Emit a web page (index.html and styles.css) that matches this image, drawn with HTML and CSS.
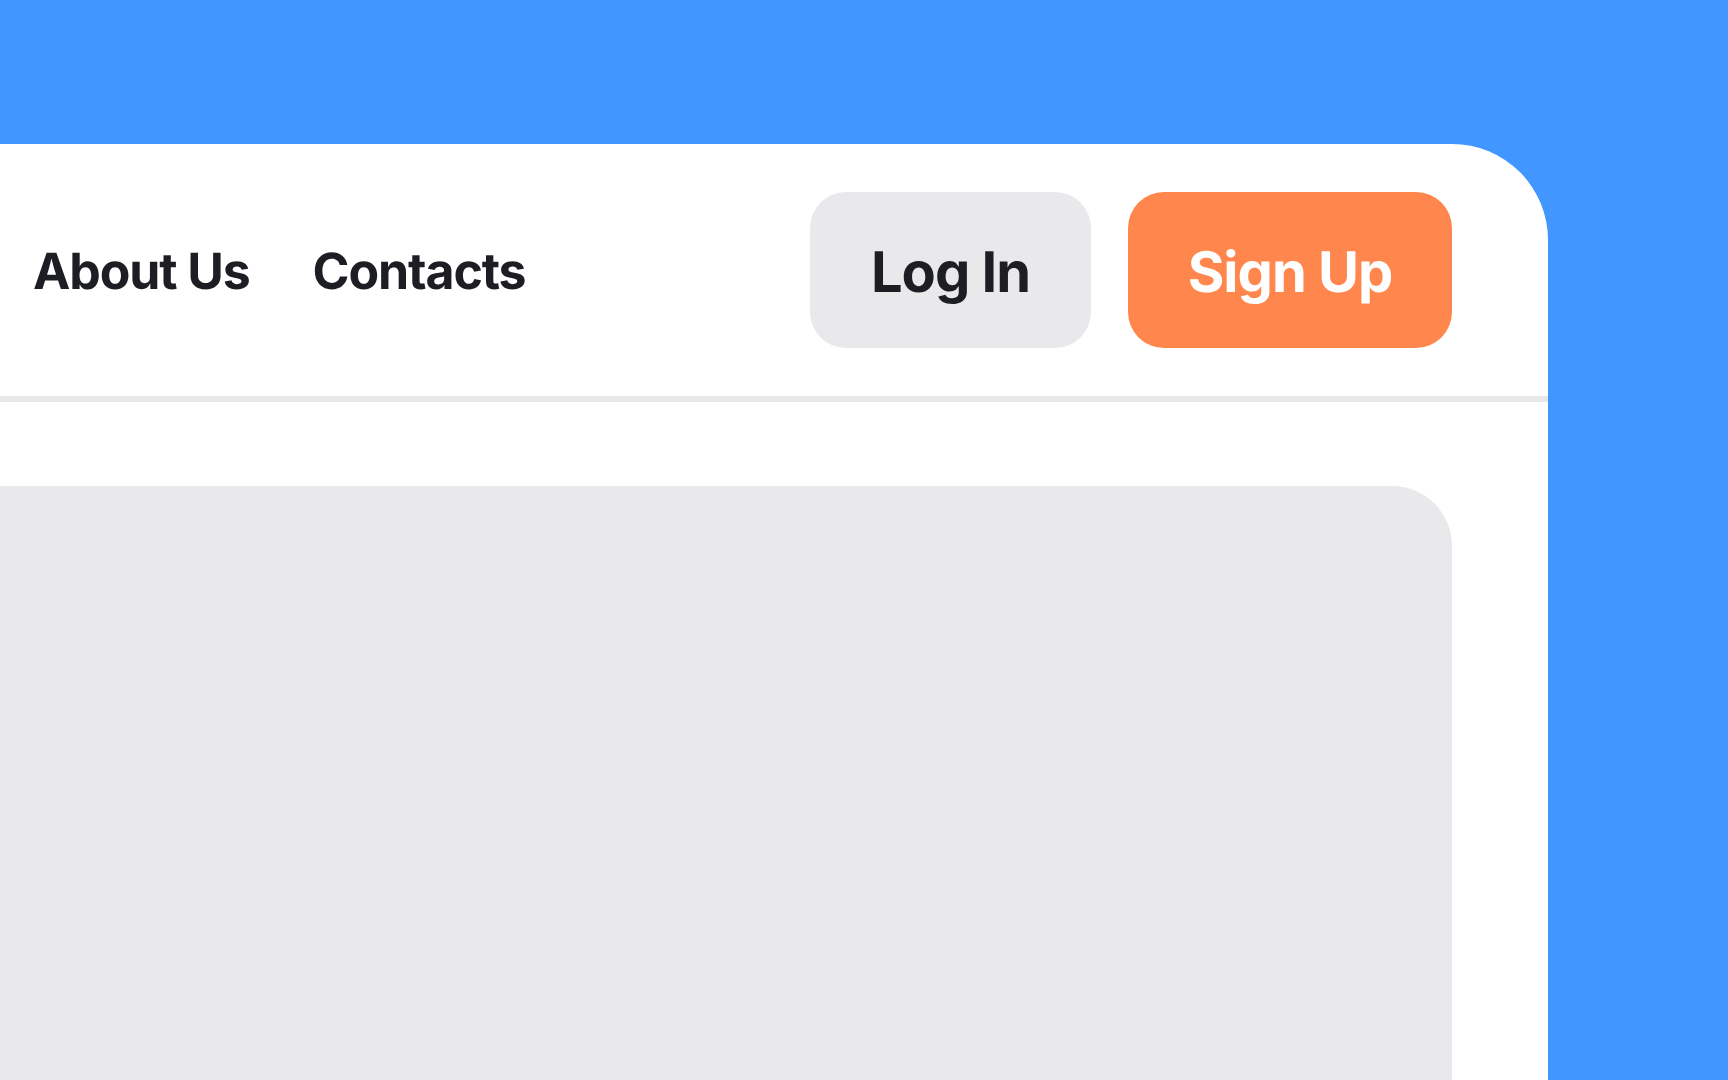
FILE: index.html
```html
<!DOCTYPE html>
<html lang="en">
<head>
<meta charset="utf-8">
<title>Header</title>
<link rel="stylesheet" href="styles.css">
</head>
<body>
<div class="panel">
  <header class="header">
    <nav class="nav">
      <a class="nav-link" href="#">About Us</a>
      <a class="nav-link" href="#">Contacts</a>
    </nav>
    <div class="actions">
      <a class="btn btn-login" href="#">Log In</a>
      <a class="btn btn-signup" href="#">Sign Up</a>
    </div>
  </header>
  <main class="content">
    <div class="hero"></div>
  </main>
</div>
</body>
</html>
```
FILE: styles.css
```css
html, body {
  margin: 0;
  padding: 0;
  height: 100%;
  overflow: hidden;
}
body {
  background: #4197ff;
  font-family: Inter, "Noto Sans", sans-serif;
  padding-top: 144px;
  box-sizing: border-box;
  text-rendering: geometricPrecision;
}
.panel {
  margin-right: 180px;
  background: #ffffff;
  border-top-right-radius: 96px;
  height: 936px;
  overflow: hidden;
}
.header {
  height: 252px;
  border-bottom: 6px solid #e8e8e9;
  display: flex;
  align-items: center;
  justify-content: space-between;
  padding: 0 96px 0 33px;
}
.nav {
  display: flex;
  gap: 63px;
  padding-top: 4px;
}
.nav-link {
  font-size: 50px;
  font-weight: 700;
  color: #1d1e23;
  text-decoration: none;
  letter-spacing: -1.1px;
}
.actions {
  display: flex;
  gap: 37px;
}
.btn {
  height: 156px;
  display: flex;
  align-items: center;
  justify-content: center;
  border-radius: 36px;
  font-size: 56px;
  font-weight: 700;
  text-decoration: none;
  letter-spacing: -1px;
  padding-top: 3px;
  box-sizing: border-box;
}
.btn-login {
  width: 281px;
  background: #e9e9eb;
  color: #1d1e23;
}
.btn-signup {
  width: 324px;
  background: #ff874d;
  color: #ffffff;
}
.content {
  padding: 84px 96px 0 0;
}
.hero {
  height: 800px;
  background: #e9e9eb;
  border-top-right-radius: 60px;
}
```
